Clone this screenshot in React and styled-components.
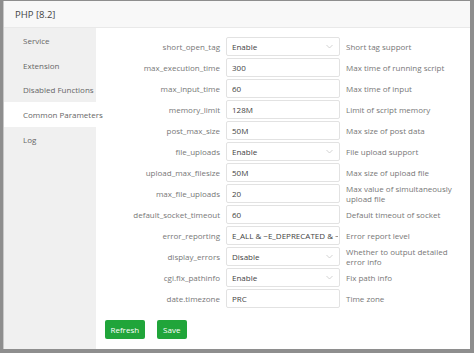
import React from 'react'
import styled, { createGlobalStyle } from 'styled-components'

const GlobalStyle = createGlobalStyle`
  html, body {
    margin: 0;
    padding: 0;
    background: #8e8e8e;
  }
  body {
    font-family: "Open Sans", "Noto Sans", sans-serif;
  }
`

const Frame = styled.div`
  width: 474px;
  height: 353px;
  box-sizing: border-box;
  padding: 1px 4px 4px 3px;
  background: #8e8e8e;
`

const Window = styled.div`
  height: 100%;
  display: flex;
  flex-direction: column;
  background: #fff;
  border-left: 1px solid #c8c8c8;
`

const Header = styled.div`
  height: 26px;
  flex: none;
  display: flex;
  align-items: center;
  padding-left: 11px;
  background: #f8f8f8;
  border-bottom: 1px solid #e9e9e9;
  color: #444;
  font-size: 9.5px;
`

const Body = styled.div`
  flex: 1;
  display: flex;
  min-height: 0;
`

const Sidebar = styled.div`
  width: 92px;
  flex: none;
  background: #f0f0f0;
`

const NavItem = styled.div`
  height: 24.7px;
  display: flex;
  align-items: center;
  padding-left: 19px;
  font-size: 8px;
  color: #666;
  white-space: nowrap;
  background: ${p => (p.active ? '#fff' : 'transparent')};
`

const Content = styled.div`
  flex: 1;
  padding: 9px 0 0 6px;
`

const Form = styled.div`
  display: grid;
  grid-template-columns: 118px 114px 116px;
  column-gap: 6px;
  row-gap: 2px;
  align-items: center;
`

const Label = styled.div`
  text-align: right;
  font-size: 8px;
  color: #777;
  white-space: nowrap;
`

const TextInput = styled.input`
  width: 100%;
  height: 19px;
  box-sizing: border-box;
  margin: 0;
  border: 1px solid #e2e2e2;
  border-radius: 2px;
  padding: 0 1px 0 5px;
  font-family: inherit;
  font-size: 8px;
  color: #444;
  background: #fff;
  outline: none;
`

const Select = styled.div`
  height: 19px;
  box-sizing: border-box;
  border: 1px solid #e2e2e2;
  border-radius: 2px;
  display: flex;
  align-items: center;
  justify-content: space-between;
  padding: 0 6px 0 5px;
  font-size: 8px;
  color: #444;
  background: #fff;
`

const Desc = styled.div`
  font-size: 8px;
  line-height: 9.5px;
  color: #777;
`

const Chevron = styled.svg`
  width: 7px;
  height: 5px;
  flex: none;
`

const Actions = styled.div`
  display: flex;
  gap: 12px;
  margin-top: 12px;
  padding-left: 3px;
`

const Button = styled.button`
  height: 19px;
  padding: 0 ${p => p.px}px;
  border: none;
  border-radius: 2px;
  background: #20a53a;
  color: #fff;
  font-family: inherit;
  font-size: 8px;
`

const params = [
  { name: 'short_open_tag', value: 'Enable', select: true, desc: 'Short tag support' },
  { name: 'max_execution_time', value: '300', desc: 'Max time of running script' },
  { name: 'max_input_time', value: '60', desc: 'Max time of input' },
  { name: 'memory_limit', value: '128M', desc: 'Limit of script memory' },
  { name: 'post_max_size', value: '50M', desc: 'Max size of post data' },
  { name: 'file_uploads', value: 'Enable', select: true, desc: 'File upload support' },
  { name: 'upload_max_filesize', value: '50M', desc: 'Max size of upload file' },
  { name: 'max_file_uploads', value: '20', desc: 'Max value of simultaneously upload file' },
  { name: 'default_socket_timeout', value: '60', desc: 'Default timeout of socket' },
  { name: 'error_reporting', value: 'E_ALL & ~E_DEPRECATED & ~E_STRICT', desc: 'Error report level' },
  { name: 'display_errors', value: 'Disable', select: true, desc: 'Whether to output detailed error info' },
  { name: 'cgi.fix_pathinfo', value: 'Enable', select: true, desc: 'Fix path info' },
  { name: 'date.timezone', value: 'PRC', desc: 'Time zone' },
]

const nav = ['Service', 'Extension', 'Disabled Functions', 'Common Parameters', 'Log']

export default function App() {
  return (
    <Frame>
      <GlobalStyle />
      <Window>
        <Header>PHP [8.2]</Header>
        <Body>
          <Sidebar>
            {nav.map(n => (
              <NavItem key={n} active={n === 'Common Parameters'}>{n}</NavItem>
            ))}
          </Sidebar>
          <Content>
            <Form>
              {params.map(p => (
                <React.Fragment key={p.name}>
                  <Label>{p.name}</Label>
                  {p.select ? (
                    <Select>
                      <span>{p.value}</span>
                      <Chevron viewBox="0 0 7 5">
                        <path d="M0.5 1 L3.5 4 L6.5 1" fill="none" stroke="#c8c8c8" strokeWidth="0.8" />
                      </Chevron>
                    </Select>
                  ) : (
                    <TextInput defaultValue={p.value} readOnly />
                  )}
                  <Desc>{p.desc}</Desc>
                </React.Fragment>
              ))}
            </Form>
            <Actions>
              <Button px={5.5}>Refresh</Button>
              <Button px={6.5}>Save</Button>
            </Actions>
          </Content>
        </Body>
      </Window>
    </Frame>
  )
}
